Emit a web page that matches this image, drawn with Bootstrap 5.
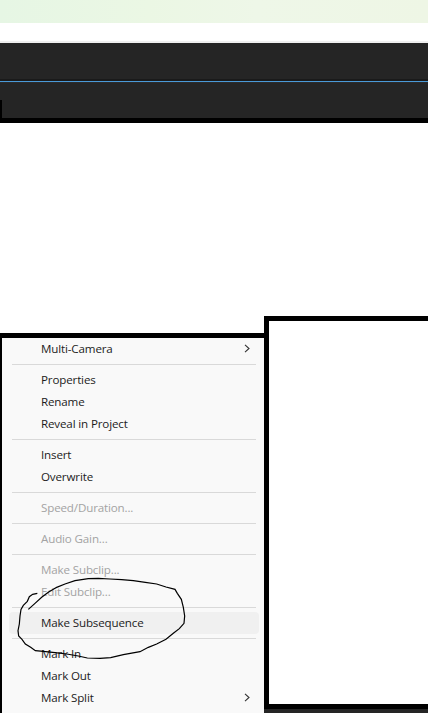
<!DOCTYPE html>
<html lang="en">
<head>
<meta charset="utf-8">
<title>Context menu</title>
<link href="https://cdn.jsdelivr.net/npm/bootstrap@5.3.0/dist/css/bootstrap.min.css" rel="stylesheet">
<style>
html, body { margin: 0; height: 713px; overflow: hidden; background: #fff; }
.shot { height: 713px; position: relative; overflow: hidden; }
.green-strip { height: 23px; background: linear-gradient(90deg, #e6f6e4 0%, #ebf7e4 35%, #eef7e8 60%, #eef6e5 100%); }
.white-strip { height: 18px; }
.grey-line { height: 2px; background: #efefef; }
.dark-panel { height: 75px; background: #252525; }
.dark-top { height: 38px; border-bottom: 2px solid #1a1a1a; }
.blue-line { height: 1px; background: #4a9ad8; }
.dark-bottom { height: 36px; border-top: 1px solid #2b2b2b; }
.notch { width: 2px; height: 18px; background: #000; }
.black-rule { height: 5px; background: #000; }
.gap-area { height: 193px; }
.left-col { width: 264px; padding-top: 17px; flex: none; }
.right-col { flex: 1 1 auto; }
.menu-frame { border-top: 5px solid #000; border-left: 2px solid #000; height: 380px; }
.shot .dropdown-menu.ctx {
  position: static; display: block; float: none; min-width: 0; margin: 0; padding: 0;
  border: 0; border-radius: 0; background: #f9f9f9; padding-left: 1px; height: 375px;
  font: 12px/22px "Open Sans", "Noto Sans", sans-serif;
}
.shot .ctx .dropdown-item {
  height: 22px; padding: 0 14px 0 38px; line-height: 21px; color: #1c1c1c; font-size: 11.6px;
  letter-spacing: -0.15px; background: transparent; border-radius: 4px;
}
.shot .ctx .dropdown-item.has-sub { padding-bottom: 1px; }
.shot .ctx .dropdown-item.disabled { color: #a3a3a3; }
.shot .ctx .dropdown-item.hot { background: #f0f0f0; margin: 0 5px 0 6px; padding-left: 32px; width: 250px; }
.shot .ctx .dropdown-divider { margin: 4px 8px 4px 9px; height: 1px; border: 0; background: #d9d9d9; opacity: 1; }
.chev { width: 6px; height: 9px; flex: none; }
.white-box { height: 393px; border-top: 5px solid #000; border-left: 5px solid #000; border-bottom: 5px solid #000; background: #fff; }
.dark-foot { height: 4px; background: #252525; }
.scribble { position: absolute; left: 0; top: 510px; width: 300px; height: 203px; pointer-events: none; }
</style>
</head>
<body>
<div class="shot">
  <div class="green-strip"></div>
  <div class="white-strip"></div>
  <div class="grey-line"></div>
  <div class="dark-panel">
    <div class="dark-top"></div>
    <div class="blue-line"></div>
    <div class="dark-bottom d-flex align-items-end"><div class="notch"></div></div>
  </div>
  <div class="black-rule"></div>
  <div class="gap-area"></div>
  <div class="d-flex">
    <div class="left-col">
      <div class="menu-frame">
        <div class="dropdown-menu ctx show">
          <a class="dropdown-item has-sub d-flex justify-content-between align-items-center" href="#">Multi-Camera
            <svg class="chev" viewBox="0 0 6 9"><path d="M1 .8 5 4.5 1 8.2" fill="none" stroke="#333" stroke-width="1.1"/></svg></a>
          <hr class="dropdown-divider">
          <a class="dropdown-item" href="#">Properties</a>
          <a class="dropdown-item" href="#">Rename</a>
          <a class="dropdown-item" href="#">Reveal in Project</a>
          <hr class="dropdown-divider">
          <a class="dropdown-item" href="#">Insert</a>
          <a class="dropdown-item" href="#">Overwrite</a>
          <hr class="dropdown-divider">
          <a class="dropdown-item disabled" href="#">Speed/Duration...</a>
          <hr class="dropdown-divider">
          <a class="dropdown-item disabled" href="#">Audio Gain...</a>
          <hr class="dropdown-divider">
          <a class="dropdown-item disabled" href="#">Make Subclip...</a>
          <a class="dropdown-item disabled" href="#">Edit Subclip...</a>
          <hr class="dropdown-divider">
          <a class="dropdown-item hot" href="#">Make Subsequence</a>
          <hr class="dropdown-divider">
          <a class="dropdown-item" href="#">Mark In</a>
          <a class="dropdown-item" href="#">Mark Out</a>
          <a class="dropdown-item has-sub d-flex justify-content-between align-items-center" href="#">Mark Split
            <svg class="chev" viewBox="0 0 6 9"><path d="M1 .8 5 4.5 1 8.2" fill="none" stroke="#333" stroke-width="1.1"/></svg></a>
        </div>
      </div>
    </div>
    <div class="right-col">
      <div class="white-box"></div>
      <div class="dark-foot"></div>
    </div>
  </div>
  <svg class="scribble" viewBox="0 0 900 609" aria-hidden="true">
    <path d="M112 250 98 253 88 260 82 274 70 286 63 298 60 318 58 342 54 362 56 378 66 388 76 402 92 412 106 422 130 424 165 428 200 432 235 438 262 444 300 445 332 443 370 434 420 425 445 412 470 402 498 388 520 370 538 356 552 340 554 318 550 292 544 268 532 250 525 238 498 231 470 222 436 217 400 212 365 209 330 207 295 205 265 206 225 212 195 222 170 232 145 247 125 262 105 280 85 298" fill="none" stroke="#000" stroke-width="3.6" stroke-linejoin="miter"/>
  </svg>
</div>
</body>
</html>
